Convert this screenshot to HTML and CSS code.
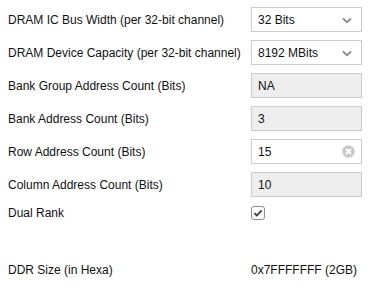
FILE: index.html
```html
<!DOCTYPE html>
<html lang="en">
<head>
    <meta charset="UTF-8">
    <title>DDR Configuration</title>
    <link rel="stylesheet" href="styles.css">
</head>
<body>
    <div class="form">
        <div class="row">
            <label>DRAM IC Bus Width (per 32-bit channel)</label>
            <div class="field select">
                <span>32 Bits</span>
                <svg class="chev" width="10" height="7" viewBox="0 0 10 7"><path d="M1 1.5 L5 5.2 L9 1.5" fill="none" stroke="#8a8a8a" stroke-width="1.8"/></svg>
            </div>
        </div>
        <div class="row">
            <label>DRAM Device Capacity (per 32-bit channel)</label>
            <div class="field select">
                <span>8192 MBits</span>
                <svg class="chev" width="10" height="7" viewBox="0 0 10 7"><path d="M1 1.5 L5 5.2 L9 1.5" fill="none" stroke="#8a8a8a" stroke-width="1.8"/></svg>
            </div>
        </div>
        <div class="row">
            <label>Bank Group Address Count (Bits)</label>
            <div class="field disabled"><span>NA</span></div>
        </div>
        <div class="row">
            <label>Bank Address Count (Bits)</label>
            <div class="field disabled"><span>3</span></div>
        </div>
        <div class="row">
            <label>Row Address Count (Bits)</label>
            <div class="field">
                <span>15</span>
                <svg class="clear" width="13" height="13" viewBox="0 0 13 13">
                    <circle cx="6.5" cy="6.5" r="6.2" fill="#c8c8c8"/>
                    <path d="M4 4 L9 9 M9 4 L4 9" stroke="#fff" stroke-width="1.8"/>
                </svg>
            </div>
        </div>
        <div class="row">
            <label>Column Address Count (Bits)</label>
            <div class="field disabled"><span>10</span></div>
        </div>
        <div class="row short">
            <label>Dual Rank</label>
            <div class="check">
                <svg width="14" height="14" viewBox="0 0 14 14">
                    <rect x="0.5" y="0.5" width="13" height="13" rx="2.5" fill="#fff" stroke="#8f8f8f"/>
                    <path d="M3.4 7.2 L5.8 9.5 L10.6 4.4" fill="none" stroke="#3a3a3a" stroke-width="1.8"/>
                </svg>
            </div>
        </div>
        <div class="row result">
            <label>DDR Size (in Hexa)</label>
            <div class="value">0x7FFFFFFF (2GB)</div>
        </div>
    </div>
</body>
</html>
```

FILE: styles.css
```css
body {
    margin: 0;
    background: #fff;
    font-family: "Liberation Sans", Arial, sans-serif;
    font-size: 12px;
    color: #111;
}
.form {
    padding: 7px 8px 0 8px;
    display: flex;
    flex-direction: column;
    gap: 8px;
}
.row {
    display: grid;
    grid-template-columns: 243px 111px;
    align-items: center;
    height: 25px;
}
.row.short {
    height: 14px;
    margin-top: 1px;
}
.row.result {
    margin-top: 34px;
    height: 16px;
}
.field {
    height: 25px;
    box-sizing: border-box;
    border: 1px solid #cbcbcb;
    background: #fff;
    display: flex;
    align-items: center;
    justify-content: space-between;
    padding: 0 8px 0 6px;
    color: #111;
}
.field.disabled {
    background: #eeeeee;
}
.select .chev {
    margin-right: 1px;
    margin-top: 1px;
}
.clear {
    margin-right: -2px;
}
.check {
    display: flex;
    height: 14px;
}
.value {
    color: #111;
}
```
